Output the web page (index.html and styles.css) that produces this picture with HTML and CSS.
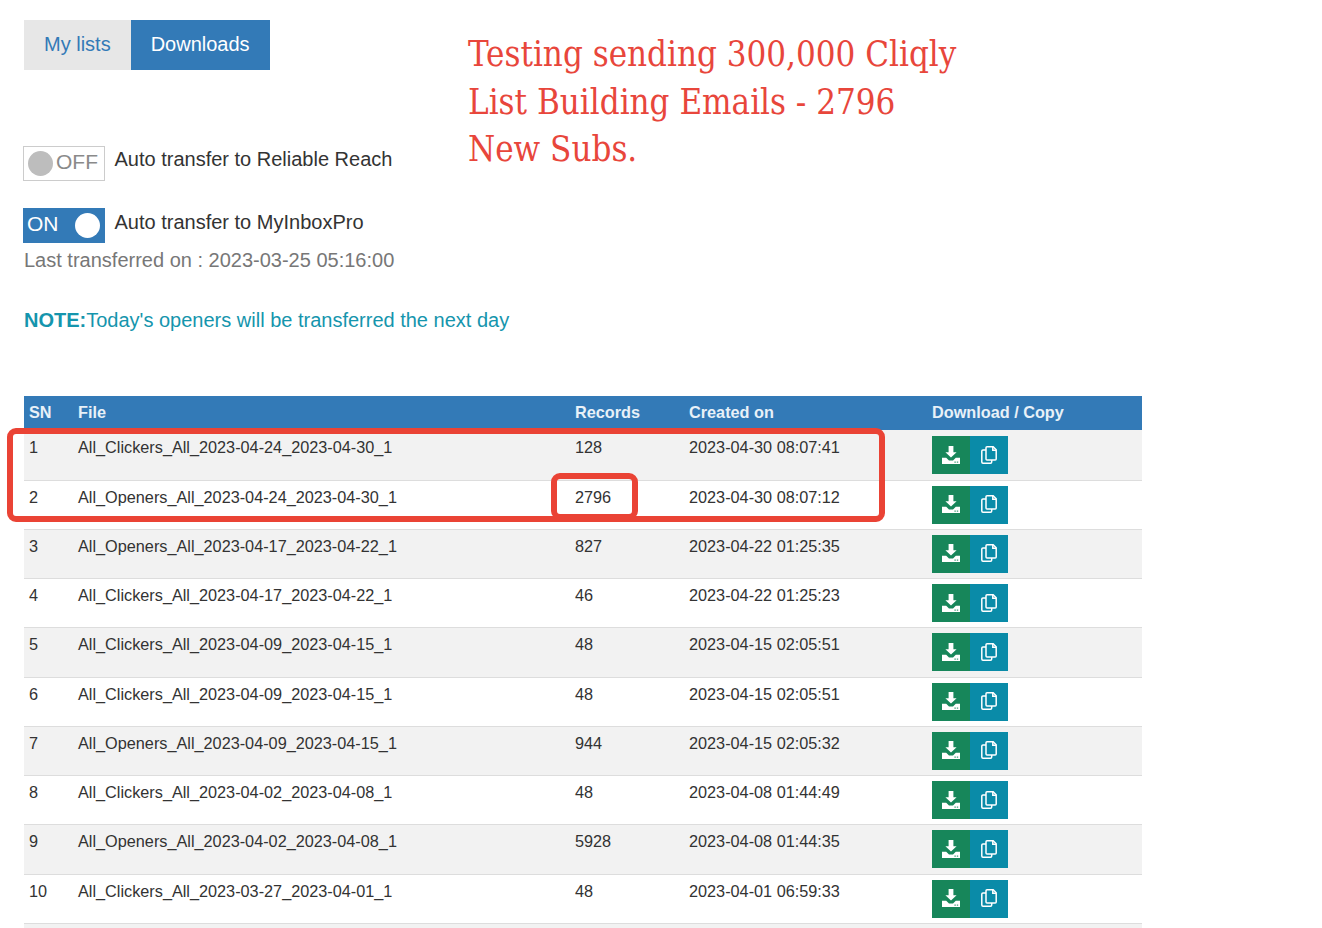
FILE: index.html
```html
<!DOCTYPE html>
<html lang="en">
<head>
<meta charset="utf-8">
<title>Downloads</title>
<link rel="stylesheet" href="styles.css">
</head>
<body>
<svg class="defs" width="0" height="0" aria-hidden="true">
  <symbol id="i-dl" viewBox="0 0 18 18">
    <path fill="#fff" d="M6.6 0h4.800v6.200h3.200L9 11.600 3.400 6.200h3.200z"/>
    <path fill="#fff" d="M0 11.800h4.200L7 14.400h4l2.800-2.600H18V18H0z"/>
    <rect x="12.400" y="15.600" width="1.400" height="1" fill="#17865a"/>
    <rect x="14.800" y="15.600" width="1.400" height="1" fill="#17865a"/>
  </symbol>
  <symbol id="i-cp" viewBox="0 0 16 18">
    <path fill="none" stroke="#fff" stroke-width="1.5" d="M6 .8h6.200l3 3V13c0 .6-.4 1-1 1H6c-.6 0-1-.4-1-1V1.800c0-.6.4-1 1-1z"/>
    <path fill="none" stroke="#fff" stroke-width="1.500" d="M11.800 1v3.200h3.200"/>
    <path fill="none" stroke="#fff" stroke-width="1.500" d="M5 4H2c-.6 0-1.200.4-1.200 1v11c0 .6.600 1.200 1.200 1.200h7.500c.6 0 1.200-.6 1.200-1.200v-2"/>
  </symbol>
</svg>
<main class="page">
  <nav class="tabs">
    <a class="tab">My lists</a>
    <a class="tab tab-active">Downloads</a>
  </nav>

  <div class="setting setting-first">
    <span class="toggle toggle-off"><span class="knob"></span><span class="toggle-text">OFF</span></span>
    <span class="setting-label">Auto transfer to Reliable Reach</span>
  </div>
  <div class="setting setting-second">
    <span class="toggle toggle-on"><span class="toggle-text">ON</span><span class="knob"></span></span>
    <span class="setting-label">Auto transfer to MyInboxPro</span>
  </div>
  <p class="last">Last transferred on : 2023-03-25 05:16:00</p>
  <p class="note"><strong>NOTE:</strong>Today's openers will be transferred the next day</p>

  <section class="table">
    <div class="row head"><div>SN</div><div>File</div><div>Records</div><div>Created on</div><div>Download / Copy</div></div>
    <div class="row odd"><div>1</div><div>All_Clickers_All_2023-04-24_2023-04-30_1</div><div>128</div><div>2023-04-30 08:07:41</div><div class="btns"><button class="btn green"><svg class="ic"><use href="#i-dl"/></svg></button><button class="btn teal"><svg class="ic ic-cp"><use href="#i-cp"/></svg></button></div></div>
    <div class="row"><div>2</div><div>All_Openers_All_2023-04-24_2023-04-30_1</div><div>2796</div><div>2023-04-30 08:07:12</div><div class="btns"><button class="btn green"><svg class="ic"><use href="#i-dl"/></svg></button><button class="btn teal"><svg class="ic ic-cp"><use href="#i-cp"/></svg></button></div></div>
    <div class="row odd"><div>3</div><div>All_Openers_All_2023-04-17_2023-04-22_1</div><div>827</div><div>2023-04-22 01:25:35</div><div class="btns"><button class="btn green"><svg class="ic"><use href="#i-dl"/></svg></button><button class="btn teal"><svg class="ic ic-cp"><use href="#i-cp"/></svg></button></div></div>
    <div class="row"><div>4</div><div>All_Clickers_All_2023-04-17_2023-04-22_1</div><div>46</div><div>2023-04-22 01:25:23</div><div class="btns"><button class="btn green"><svg class="ic"><use href="#i-dl"/></svg></button><button class="btn teal"><svg class="ic ic-cp"><use href="#i-cp"/></svg></button></div></div>
    <div class="row odd"><div>5</div><div>All_Clickers_All_2023-04-09_2023-04-15_1</div><div>48</div><div>2023-04-15 02:05:51</div><div class="btns"><button class="btn green"><svg class="ic"><use href="#i-dl"/></svg></button><button class="btn teal"><svg class="ic ic-cp"><use href="#i-cp"/></svg></button></div></div>
    <div class="row"><div>6</div><div>All_Clickers_All_2023-04-09_2023-04-15_1</div><div>48</div><div>2023-04-15 02:05:51</div><div class="btns"><button class="btn green"><svg class="ic"><use href="#i-dl"/></svg></button><button class="btn teal"><svg class="ic ic-cp"><use href="#i-cp"/></svg></button></div></div>
    <div class="row odd"><div>7</div><div>All_Openers_All_2023-04-09_2023-04-15_1</div><div>944</div><div>2023-04-15 02:05:32</div><div class="btns"><button class="btn green"><svg class="ic"><use href="#i-dl"/></svg></button><button class="btn teal"><svg class="ic ic-cp"><use href="#i-cp"/></svg></button></div></div>
    <div class="row"><div>8</div><div>All_Clickers_All_2023-04-02_2023-04-08_1</div><div>48</div><div>2023-04-08 01:44:49</div><div class="btns"><button class="btn green"><svg class="ic"><use href="#i-dl"/></svg></button><button class="btn teal"><svg class="ic ic-cp"><use href="#i-cp"/></svg></button></div></div>
    <div class="row odd"><div>9</div><div>All_Openers_All_2023-04-02_2023-04-08_1</div><div>5928</div><div>2023-04-08 01:44:35</div><div class="btns"><button class="btn green"><svg class="ic"><use href="#i-dl"/></svg></button><button class="btn teal"><svg class="ic ic-cp"><use href="#i-cp"/></svg></button></div></div>
    <div class="row"><div>10</div><div>All_Clickers_All_2023-03-27_2023-04-01_1</div><div>48</div><div>2023-04-01 06:59:33</div><div class="btns"><button class="btn green"><svg class="ic"><use href="#i-dl"/></svg></button><button class="btn teal"><svg class="ic ic-cp"><use href="#i-cp"/></svg></button></div></div>
    <div class="row odd row-end"></div>
  </section>

  <h1 class="annotation">Testing sending 300,000 Cliqly<br>List Building Emails - 2796<br>New Subs.</h1>
  <div class="mark mark-rows"></div>
  <div class="mark mark-cell"></div>
</main>
</body>
</html>
```
FILE: styles.css
```css
html, body {
  margin: 0;
  background: #fff;
}
.defs { position: absolute; }
.page {
  position: relative;
  padding: 20px 0 0 24px;
  font-family: "Liberation Sans", Arial, sans-serif;
  color: #333;
}
.tabs { display: flex; height: 50px; }
.tab {
  display: flex;
  align-items: center;
  padding: 0 20px 2px;
  font-size: 20px;
  color: #337ab7;
  background: #e7e7e7;
}
.tab-active { color: #fff; background: #337ab7; }
.setting {
  display: flex;
  align-items: flex-start;
  gap: 9.5px;
  margin-left: -1px;
  font-size: 20px;
  line-height: 28px;
}
.setting-first { margin-top: 76px; }
.setting-second { margin-top: 27px; }
.toggle {
  box-sizing: border-box;
  flex: none;
  display: flex;
  align-items: center;
  justify-content: space-between;
  width: 82px;
  height: 35px;
  padding: 0 4px;
  font-size: 21px;
  line-height: 1;
}
.toggle-text { margin-top: -4px; }
.toggle-off { border: 1px solid #ccc; color: #8a8a8a; background: #fff; padding-right: 6px; }
.toggle-off .knob { background: #bdbdbd; }
.toggle-on { color: #fff; background: #337ab7; padding-right: 5px; }
.toggle-on .knob { background: #fff; }
.knob { width: 25px; height: 25px; border-radius: 50%; }
.setting-label { margin-top: -1px; }
.setting-second .setting-label { margin-top: 0; }
.last {
  margin: 3px 0 0;
  font-size: 20px;
  line-height: 28px;
  color: #777;
}
.note {
  margin: 32px 0 0;
  font-size: 20px;
  line-height: 28px;
  color: #1595ad;
}
.table { width: 1118px; margin-top: 62px; font-size: 16.25px; }
.row {
  box-sizing: border-box;
  display: grid;
  grid-template-columns: 49px 497px 114px 243px 215px;
  height: 49.25px;
  border-top: 1px solid #ddd;
  line-height: 24px;
}
.row > div { padding: 4px 5px 0; }
.odd { background: #f2f2f2; }
.head + .row { border-top-color: #f2f2f2; }
.row-end { height: 5.25px; }
.head {
  height: 34.25px;
  border: 0;
  font-weight: bold;
  color: #e8f1f8;
  background: #337ab7;
}
.row.head > div { padding-top: 4px; }
.row > .btns { display: flex; align-items: flex-start; padding-top: 5px; }
.btn {
  display: flex;
  align-items: center;
  justify-content: center;
  width: 38px;
  height: 38px;
  padding: 0 0 1px;
  border: 0;
}
.green { background: #17865a; }
.teal { background: #0a8ba8; }
.ic { width: 18px; height: 18px; }
.ic-cp { width: 16px; }
.annotation {
  position: absolute;
  left: 468px;
  top: 31px;
  margin: 0;
  font-family: "DejaVu Serif Condensed", "DejaVu Serif", serif;
  font-stretch: condensed;
  font-size: 34.6px;
  font-weight: normal;
  line-height: 47.5px;
  color: #e8463b;
}
.mark {
  position: absolute;
  box-sizing: border-box;
  border: 6px solid #ea4335;
  border-radius: 9px;
}
.mark-rows { left: 7px; top: 428px; width: 878px; height: 94px; }
.mark-cell { left: 551px; top: 473px; width: 87px; height: 47px; }
```
